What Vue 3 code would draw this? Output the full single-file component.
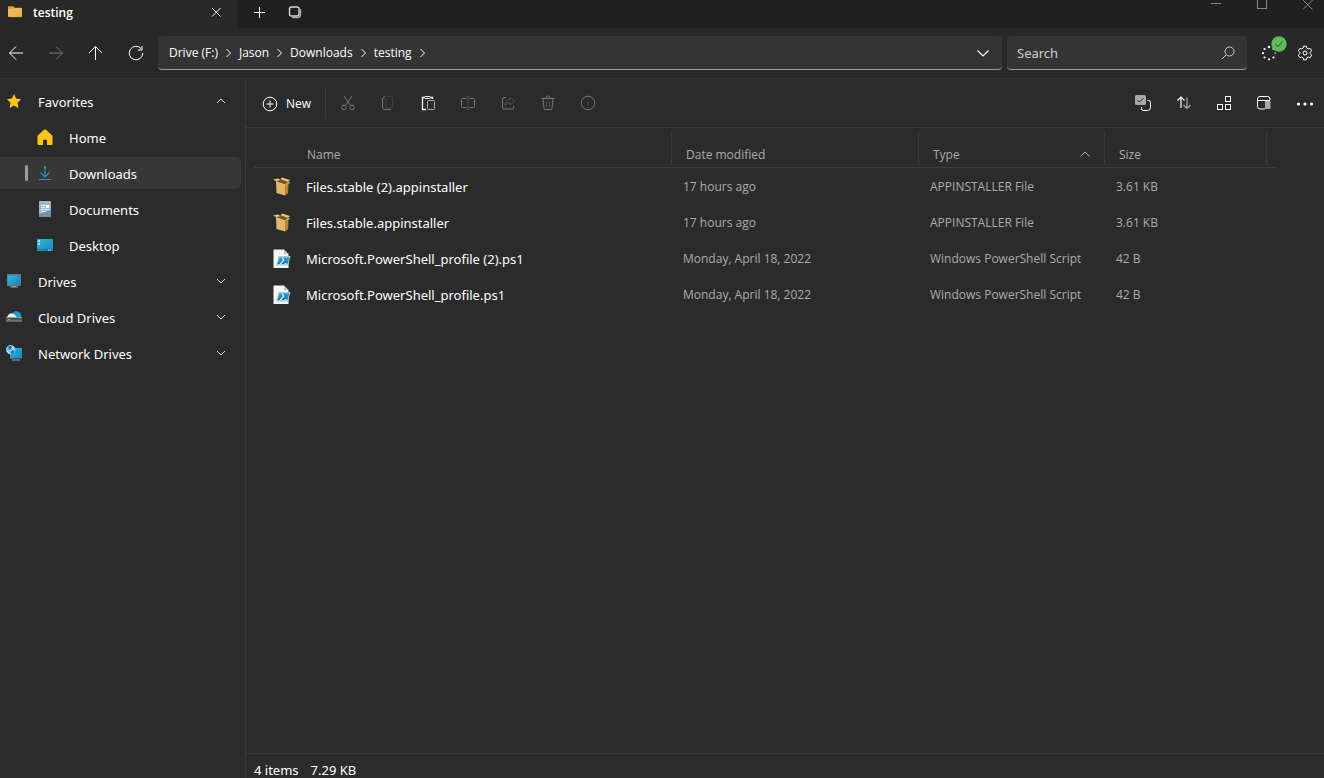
<script setup>
import { ref } from 'vue'

const search = ref('')
const crumbs = ['Drive (F:)', 'Jason', 'Downloads', 'testing']
const favorites = [
  { name: 'Home', icon: 'home' },
  { name: 'Downloads', icon: 'downloads', active: true },
  { name: 'Documents', icon: 'documents' },
  { name: 'Desktop', icon: 'desktop' },
]
const sections = [
  { name: 'Drives', icon: 'drives' },
  { name: 'Cloud Drives', icon: 'cloud' },
  { name: 'Network Drives', icon: 'network' },
]
const files = [
  { name: 'Files.stable (2).appinstaller', date: '17 hours ago', type: 'APPINSTALLER File', size: '3.61 KB', icon: 'box' },
  { name: 'Files.stable.appinstaller', date: '17 hours ago', type: 'APPINSTALLER File', size: '3.61 KB', icon: 'box' },
  { name: 'Microsoft.PowerShell_profile (2).ps1', date: 'Monday, April 18, 2022', type: 'Windows PowerShell Script', size: '42 B', icon: 'script' },
  { name: 'Microsoft.PowerShell_profile.ps1', date: 'Monday, April 18, 2022', type: 'Windows PowerShell Script', size: '42 B', icon: 'script' },
]
</script>

<template>
  <div class="window">
    <svg class="defs" width="0" height="0" aria-hidden="true">
      <defs>
        <linearGradient id="blue" x1="0" y1="0" x2="1" y2="1">
          <stop offset="0" stop-color="#35b8dc" />
          <stop offset="1" stop-color="#1683ba" />
        </linearGradient>
        <linearGradient id="folder" x1="0" y1="0" x2="1" y2="1">
          <stop offset="0" stop-color="#e5c079" />
          <stop offset="1" stop-color="#eeb03a" />
        </linearGradient>
      </defs>
    </svg>

    <header class="titlebar">
      <div class="tab">
        <svg class="folder" width="16" height="16" viewBox="0 0 16 16">
          <path d="M1 3.200a1 1 0 0 1 1-1h4.200l1.600 1.600H14a1 1 0 0 1 1 1V12H1z" fill="#e8a91c" />
          <path d="M1 5h5.400l1.300-1H14a1 1 0 0 1 1 1v7a1 1 0 0 1-1 1H2a1 1 0 0 1-1-1z" fill="url(#folder)" />
          <path d="M1.600 12.600h12.800" stroke="#f3b51c" />
        </svg>
        <span class="tab-name">testing</span>
        <button class="icon-btn tab-close" aria-label="Close tab">
          <svg width="16" height="16" viewBox="0 0 16 16"><path d="M4 4l8.500 8.500M12.500 4L4 12.500" /></svg>
        </button>
      </div>
      <button class="icon-btn new-tab" aria-label="New tab">
        <svg width="16" height="16" viewBox="0 0 16 16"><path d="M8.500 3v11M3 8.500h11" /></svg>
      </button>
      <button class="icon-btn" aria-label="Vertical tabs">
        <svg width="16" height="16" viewBox="0 0 16 16">
          <rect x="2.500" y="3" width="9.500" height="9" rx="2" stroke="#d8d8d8" stroke-width="1.400" />
          <path d="M5 13.500h5.500a3 3 0 0 0 3-3V5" stroke="#aaa" stroke-width="1.400" />
        </svg>
      </button>
      <div class="captions">
        <button class="icon-btn" aria-label="Minimize"><svg width="16" height="16" viewBox="0 0 16 16"><path d="M3 7.500h10" /></svg></button>
        <button class="icon-btn" aria-label="Maximize"><svg width="16" height="16" viewBox="0 0 16 16"><rect x="3.500" y="3.500" width="9" height="9" /></svg></button>
        <button class="icon-btn" aria-label="Close"><svg width="16" height="16" viewBox="0 0 16 16"><path d="M3 4l9.500 9.500M12.500 4L3 13.500" /></svg></button>
      </div>
    </header>

    <nav class="navbar">
      <div class="nav-buttons">
        <button class="icon-btn" aria-label="Back"><svg width="16" height="16" viewBox="0 0 16 16"><path d="M15 8H1.500M8 1.500L1.500 8 8 14.500" /></svg></button>
        <button class="icon-btn dim" aria-label="Forward"><svg width="16" height="16" viewBox="0 0 16 16"><path d="M1 8h13.500M8 1.500L14.500 8 8 14.500" /></svg></button>
        <button class="icon-btn" aria-label="Up"><svg width="16" height="16" viewBox="0 0 16 16"><path d="M7.500 15V1.500M1 8l6.500-6.500L14 8" /></svg></button>
        <button class="icon-btn" aria-label="Refresh"><svg width="16" height="16" viewBox="0 0 16 16"><path d="M13.300 3.800A6.800 6.800 0 1 0 14.800 8M14 1v4H9.800" /></svg></button>
      </div>
      <div class="address">
        <template v-for="crumb in crumbs" :key="crumb">
          <a class="crumb" href="#">{{ crumb }}</a>
          <svg class="crumb-sep" width="7" height="10" viewBox="0 0 7 10"><path d="M1.500 1L5.500 5l-4 4" /></svg>
        </template>
        <button class="icon-btn address-more" aria-label="Show history">
          <svg width="16" height="16" viewBox="0 0 16 16"><path d="M2.500 5.500L8 11l5.500-5.500" stroke-width="1.200" /></svg>
        </button>
      </div>
      <div class="search">
        <input v-model="search" type="text" placeholder="Search" aria-label="Search" />
        <button class="icon-btn" aria-label="Run search">
          <svg width="16" height="16" viewBox="0 0 16 16"><circle cx="9.500" cy="6.500" r="4.500" /><path d="M6.300 9.700L2 14" /></svg>
        </button>
      </div>
      <button class="icon-btn status-center" aria-label="Status center">
        <svg width="16" height="16" viewBox="0 0 16 16" class="dots">
          <circle cx="8" cy="2" r="1.200" /><circle cx="3.500" cy="4" r="1.100" /><circle cx="2" cy="8.200" r="1.100" />
          <circle cx="3.500" cy="12.500" r="1.100" /><circle cx="8" cy="14.300" r="1.100" /><circle cx="12.500" cy="12.500" r="1.100" />
          <circle cx="14.200" cy="8.200" r="1.100" fill="#888" /><circle cx="12.500" cy="4" r="1.100" />
        </svg>
        <svg class="badge" width="16" height="16" viewBox="0 0 16 16"><circle cx="8" cy="8" r="7.700" fill="#62bb5b" stroke="none" /><path d="M4.500 8.300l2.400 2.200 4.600-4.800" stroke="#244b22" /></svg>
      </button>
      <button class="icon-btn" aria-label="Settings">
        <svg width="16" height="16" viewBox="0 0 16 16">
          <path d="M6.600 1.200h2.800l.5 2 1.300.75 2-.6 1.500 2.500-1.500 1.400v1.500l1.500 1.400-1.500 2.500-2-.6-1.300.75-.5 2H6.600l-.5-2-1.300-.75-2 .6-1.500-2.500 1.500-1.400V7.250L1.300 5.850l1.500-2.500 2 .6 1.300-.75z" />
          <circle cx="8" cy="8" r="2" />
        </svg>
      </button>
    </nav>

    <div class="body">
      <aside class="sidebar">
        <button class="side-row section">
          <svg class="side-icon" width="16" height="16" viewBox="0 0 16 16"><path d="M8 1l2.100 4.600 5 .6-3.600 3.500.9 5.300L8 12.500 3.600 15l.9-5.300L.9 6.200l5-.6z" fill="#fac516" /></svg>
          <span>Favorites</span>
          <svg class="chev" width="12" height="12" viewBox="0 0 12 12"><path d="M2 8l4-4 4 4" /></svg>
        </button>
        <a v-for="item in favorites" :key="item.name" href="#" class="side-row child" :class="{ active: item.active }">
          <svg class="side-icon" width="16" height="16" viewBox="0 0 16 16">
            <template v-if="item.icon === 'home'">
              <path d="M.5 7.500Q.5 6.800 1 6.300L7 .8q1-.8 2 0l6 5.500q.5.500.5 1.200V15q0 1-1 1H10v-4.500q0-.8-.8-.8H6.800q-.8 0-.8.8V16H1.500q-1 0-1-1z" fill="#fac516" />
            </template>
            <template v-else-if="item.icon === 'downloads'">
              <path d="M8 1v11M3.500 7.500L8 12l4.500-4.500M2 14.500h12" fill="none" stroke="#2795c0" stroke-width="1.200" />
              <path d="M8 1v2.500" stroke="#3fae85" stroke-width="1.200" />
            </template>
            <template v-else-if="item.icon === 'documents'">
              <rect x="2" y="0" width="12" height="16" rx="1" fill="#9db8c8" />
              <path d="M2 13l12-4v6a1 1 0 0 1-1 1H3a1 1 0 0 1-1-1z" fill="#7593a8" />
              <path d="M4 4.500h5M4 6.500h4M4 8.500h8M4 10.500h5" stroke="#e4edf3" />
              <rect x="9" y="4" width="3" height="3" fill="#fff" />
            </template>
            <template v-else>
              <rect x="0" y="2" width="16" height="12" rx="1" fill="url(#blue)" />
              <path d="M1 4h2M1 7h2" stroke="#d8f4fc" stroke-width="1.500" />
              <path d="M0 12.500h16" stroke="#1878a8" /><path d="M11 13h1M13 13h1" stroke="#e4f7ff" />
            </template>
          </svg>
          <span>{{ item.name }}</span>
        </a>
        <button v-for="s in sections" :key="s.name" class="side-row section">
          <svg class="side-icon" width="16" height="16" viewBox="0 0 16 16">
            <template v-if="s.icon === 'drives'">
              <rect x="1" y="1" width="14" height="12" fill="#697378" />
              <rect x="1.500" y="2.500" width="13" height="9.500" fill="url(#blue)" />
              <path d="M6 13.500h4M4 14h8" stroke="#9ba5aa" />
            </template>
            <template v-else-if="s.icon === 'cloud'">
              <path d="M7 7a3.500 3.500 0 0 1 5-4.500Q16 4 15 8H8z" fill="#1d9bd1" />
              <path d="M1 8.500q.5-3 3-4 3-1 5 1.500L11 8.500z" fill="#e9edf0" />
              <path d="M0 8h16v4H0z" fill="#4e5356" /><path d="M0 8.500h16M0 12h16" stroke="#92979a" /><path d="M2 10.500h2" stroke="#55d267" />
            </template>
            <template v-else>
              <rect x="4" y="3" width="12" height="10.500" fill="url(#blue)" />
              <path d="M6 15h8" stroke="#9ba5aa" />
              <circle cx="4.700" cy="4.800" r="4.700" fill="#89c9e4" /><path d="M2 2q3-2 4 0L5 4 3 5zM4 7l4-2q1 3-2 4z" fill="#167aa9" /><path d="M1 6l2 2M6 2l2 2" stroke="#eef9ff" />
            </template>
          </svg>
          <span>{{ s.name }}</span>
          <svg class="chev" width="12" height="12" viewBox="0 0 12 12"><path d="M2 4l4 4 4-4" /></svg>
        </button>
      </aside>

      <main class="content">
        <div class="toolbar">
          <button class="icon-btn new-btn">
            <svg width="16" height="16" viewBox="0 0 16 16"><circle cx="8" cy="8" r="6.800" /><path d="M8 4.500v7M4.500 8h7" /></svg>
            <span>New</span>
          </button>
          <span class="divider"></span>
          <div class="tools">
            <button class="icon-btn dim" aria-label="Cut" disabled><svg width="16" height="16" viewBox="0 0 16 16"><path d="M4 1l6.500 9.500M12 1L5.500 10.500" /><circle cx="4" cy="12.500" r="2.300" /><circle cx="12" cy="12.500" r="2.300" /></svg></button>
            <button class="icon-btn dim" aria-label="Copy" disabled><svg width="16" height="16" viewBox="0 0 16 16"><rect x="5.500" y="1.500" width="7" height="11" rx="1.500" stroke="#404040" /><path d="M5 1.500Q2.500 2 2.500 4v8q0 2.500 2.500 2.500h6" /></svg></button>
            <button class="icon-btn" aria-label="Paste"><svg width="16" height="16" viewBox="0 0 16 16"><path d="M4.500 2.500h-2v12H6M10.500 2.500h2V4" stroke-width="1.300" /><rect x="4.500" y="1.500" width="6" height="2" rx="1" /><rect x="7.500" y="5.500" width="7" height="9" rx="1" stroke="#aaa" /></svg></button>
            <button class="icon-btn dim" aria-label="Rename" disabled><svg width="16" height="16" viewBox="0 0 16 16"><path d="M6.500 3.500h-4q-1 0-1 1v7q0 1 1 1h4M9.500 3.500h4q1 0 1 1v7q0 1-1 1h-4" /><path d="M8 2v12M6.500 1.500h3M6.500 14.500h3" stroke="#505050" /></svg></button>
            <button class="icon-btn dim" aria-label="Share" disabled><svg width="16" height="16" viewBox="0 0 16 16"><path d="M6 2.500H4Q2.500 2.500 2.500 4v8.500q0 1.500 1.500 1.500h8q1.500 0 1.500-1.500V11" /><path d="M10 2l4.500 4L10 10V7.800Q6.500 8 5 10.500 5.500 5 10 4.300z" stroke="#505050" /></svg></button>
            <button class="icon-btn dim" aria-label="Delete" disabled><svg width="16" height="16" viewBox="0 0 16 16"><path d="M1.500 3.500h13M6 3q0-2 2-2t2 2M3 3.500l1 10q.1 1 1 1h6q.9 0 1-1l1-10" /><path d="M6.500 6v6M9.500 6v6" stroke="#505050" /></svg></button>
            <button class="icon-btn dim" aria-label="Properties" disabled><svg width="16" height="16" viewBox="0 0 16 16"><circle cx="8" cy="8" r="6.800" /><path d="M8 7v4.500M8 4.500v1" stroke="#484848" /></svg></button>
          </div>
          <div class="tools right">
            <button class="icon-btn" aria-label="Selection options"><svg width="18" height="18" viewBox="0 0 18 18"><rect x="1" y="1" width="11" height="10" rx="1.500" fill="#a9a9a9" stroke="none" /><path d="M3.500 6l2 2 4-4" stroke="#2b2b2b" /><path d="M13.500 6.500h1q2 0 2 2v5q0 3-3 3H9q-1.500 0-1.500-2V13" /></svg></button>
            <button class="icon-btn" aria-label="Sort"><svg width="16" height="16" viewBox="0 0 16 16"><path d="M5 13V2M1.500 5.500L5 2l3.500 3.500" stroke-width="1.200" /><path d="M11 2.500v11M7.500 10l3.500 3.500 3.500-3.500" stroke="#aaa" stroke-width="1.200" /></svg></button>
            <button class="icon-btn" aria-label="Layout"><svg width="16" height="16" viewBox="0 0 16 16"><rect x="9.500" y="1.500" width="5" height="5" /><rect x="1.500" y="9.500" width="5" height="5" /><rect x="9.500" y="9.500" width="5" height="5" /></svg></button>
            <button class="icon-btn" aria-label="Preview pane"><svg width="16" height="16" viewBox="0 0 16 16"><path d="M9 6h5.500v8H9z" fill="#aaa" stroke="none" /><path d="M14 5V4q0-2.500-2.500-2.500H4Q1.500 1.500 1.500 4v7.500Q1.500 14 4 14h5M1.500 5.500H14" /></svg></button>
            <button class="icon-btn" aria-label="More"><svg width="18" height="16" viewBox="0 0 18 16" class="dots"><circle cx="2.500" cy="9" r="1.600" /><circle cx="9" cy="9" r="1.600" /><circle cx="15.500" cy="9" r="1.600" /></svg></button>
          </div>
        </div>

        <div class="files">
          <table>
            <colgroup><col /><col class="c-date" /><col class="c-type" /><col class="c-size" /><col class="c-end" /></colgroup>
            <thead>
              <tr>
                <th class="name" scope="col"><div>Name</div></th>
                <th scope="col"><div>Date modified</div></th>
                <th scope="col"><div>Type<svg width="12" height="12" viewBox="0 0 12 12"><path d="M1.500 7.500L6 3l4.500 4.500" /></svg></div></th>
                <th scope="col"><div>Size</div></th>
                <td></td>
              </tr>
            </thead>
            <tbody>
              <tr v-for="f in files" :key="f.name">
                <td class="file-name">
                  <div>
                    <svg v-if="f.icon === 'box'" width="20" height="20" viewBox="0 0 20 20">
                      <path d="M4 4l9 3v11.500L4.500 16z" fill="#e2b76c" />
                      <path d="M13 7l3.500-2-.3 11-3.200 2.500z" fill="#b98431" />
                      <path d="M4.500 3.800L9 2.500 16 5l-3 1.800z" fill="#7d541c" />
                      <path d="M1 2.500l5-1L8.500 3 4.500 4.200zM8.500 2.200l1.500-1.700L18 3l-2 2z" fill="#e9c581" />
                      <path d="M12.500 7L17 4.500l1 1.500-4 2z" fill="#d09b47" />
                    </svg>
                    <svg v-else width="20" height="20" viewBox="0 0 20 20">
                      <path d="M1.500.5H12L16.500 5v14h-15z" fill="#f5f6f7" /><path d="M12 .5V5h4.500z" fill="#b8c0c5" />
                      <path d="M6.500 7h12L16 16.500H4z" fill="#a9cbdc" /><path d="M7.500 8.500h9.800L15.500 15H5.700z" fill="#2596cb" />
                      <path d="M5.500 15l2.500-3 2.500 1.500L13 10l2.500 5z" fill="#176fa3" />
                      <path d="M10 8.500l2 3-4 3.500M12.500 14.500h2" fill="none" stroke="#e9f5fb" stroke-width="1.200" />
                    </svg>
                    <span>{{ f.name }}</span>
                  </div>
                </td>
                <td>{{ f.date }}</td>
                <td>{{ f.type }}</td>
                <td>{{ f.size }}</td>
                <td></td>
              </tr>
            </tbody>
          </table>
        </div>

        <footer class="statusbar"><span>4 items</span><span>7.29 KB</span></footer>
      </main>
    </div>
  </div>
</template>

<style>
body {
  background: #2b2b2b;
}
</style>

<style scoped>
.window {
  box-sizing: border-box;
  height: 100vh;
  display: flex;
  flex-direction: column;
  overflow: hidden;
  background: #2b2b2b;
  color: #fff;
  font-family: "Segoe UI Variable", "Segoe UI", "Noto Sans", sans-serif;
  font-size: 13px;
  line-height: 20px;
}
.defs { position: absolute; }
button, input { font: inherit; color: inherit; background: none; border: 0; padding: 0; margin: 0; }
a { color: inherit; text-decoration: none; }
svg { display: block; flex: none; }
.icon-btn {
  display: flex;
  align-items: center;
  justify-content: center;
  min-width: 16px;
  color: #fff;
}
.icon-btn svg, .crumb-sep, .chev, th svg {
  fill: none;
  stroke: currentColor;
}
.icon-btn .dots { fill: currentColor; stroke: none; }
.icon-btn.dim { color: #777; }

.titlebar {
  display: flex;
  flex: none;
  height: 28px;
  background: #202020;
}
.titlebar > .icon-btn { height: 24px; }
.tab {
  display: flex;
  align-items: center;
  box-sizing: border-box;
  width: 237px;
  padding: 0 13px 4px 7px;
  background: #282828;
  border-top-right-radius: 4px;
}
.tab-name {
  flex: 1;
  margin-left: 10px;
  padding-top: 2px;
  font-family: "Segoe UI Variable", "Segoe UI", "Open Sans", sans-serif;
  font-size: 12px;
  font-weight: 600;
}
.new-tab { margin: 0 20px 0 14px; }
.captions { display: flex; gap: 30px; margin: 0 8px 0 auto; align-items: flex-start; }
.captions .icon-btn { color: #888; height: 16px; margin-top: -4px; }

.navbar {
  display: flex;
  align-items: center;
  flex: none;
  height: 50px;
  padding-right: 11px;
  background: #282828;
  border-bottom: 1px solid #323232;
}
.nav-buttons { display: flex; gap: 24px; margin: 0 14px 0 8px; }
.address, .search {
  display: flex;
  align-items: center;
  box-sizing: border-box;
  height: 34px;
  background: #343434;
  border-bottom: 1px solid #9a9a9a;
  border-radius: 4px;
}
.address {
  flex: 1;
  gap: 7px;
  padding: 1px 11px 0 11px;
  font-family: "Segoe UI Variable", "Segoe UI", "Open Sans", sans-serif;
  font-size: 12px;
  font-weight: 500;
}
.address-more { margin-left: auto; }
.search { width: 240px; margin: 0 14px 0 5px; padding: 0 11px 0 10px; }
.search input { flex: 1; min-width: 0; outline: none; }
.search input::placeholder { color: #cfcfcf; opacity: 1; }
.search .icon-btn { color: #ccc; }
.status-center { position: relative; margin-right: 20px; }
.badge { position: absolute; left: 10px; top: -9px; }

.body { display: flex; flex: 1; min-height: 0; }
.sidebar {
  display: flex;
  flex-direction: column;
  flex: none;
  gap: 4px;
  box-sizing: border-box;
  width: 246px;
  padding: 6px 4px 0 0;
  border-right: 1px solid #3a3a3a;
}
.side-row {
  display: flex;
  align-items: center;
  box-sizing: border-box;
  height: 32px;
  padding: 2px 14px 0 6px;
  text-align: left;
  border-radius: 0 5px 5px 0;
}
.side-row span { margin-left: 16px; }
.side-icon { margin-bottom: 2px; }
.side-row .chev { margin-left: auto; color: #ddd; margin-bottom: 2px; }
.child { padding-left: 37px; position: relative; }
.active { background: #373737; }
.active::before {
  content: "";
  position: absolute;
  left: 25px;
  top: 8px;
  width: 3px;
  height: 16px;
  border-radius: 2px;
  background: #9d9d9d;
}

.content { display: flex; flex-direction: column; flex: 1; min-width: 0; }
.toolbar {
  display: flex;
  align-items: center;
  flex: none;
  height: 48px;
  padding: 0 10px 0 16px;
  border-bottom: 1px solid #3a3a3a;
}
.new-btn {
  gap: 8px;
  padding-top: 1px;
  font-family: "Segoe UI Variable", "Segoe UI", "Open Sans", sans-serif;
  font-size: 12px;
  font-weight: 500;
}
.divider { width: 1px; height: 32px; margin: 0 14px; background: #3d3d3d; }
.tools { display: flex; gap: 24px; }
.right { margin-left: auto; }

.files { flex: 1; padding: 0 48px 0 8px; }
table {
  width: 100%;
  table-layout: fixed;
  border-collapse: separate;
  border-spacing: 0;
  font-family: "Segoe UI Variable", "Segoe UI", "Open Sans", sans-serif;
  font-size: 12px;
  line-height: 16px;
  color: #ababab;
}
.c-date { width: 247px; }
.c-type { width: 186px; }
.c-size { width: 162px; }
.c-end { width: 9px; }
th, td { padding: 0; text-align: left; }
thead th, thead td { height: 39px; border-bottom: 1px solid #3d3d3d; font-weight: 400; }
th div {
  display: flex;
  align-items: center;
  justify-content: space-between;
  box-sizing: border-box;
  height: 33px;
  padding: 15px 13px 0 14px;
  border-right: 1px solid #3a3a3a;
}
th.name div { padding-left: 53px; }
tbody td { height: 34px; padding: 2px 0 0 11px; }
tbody td.file-name {
  padding-left: 18px;
  color: #fff;
  font-family: "Segoe UI Variable", "Segoe UI", "Noto Sans", sans-serif;
  font-size: 13px;
  line-height: 20px;
}
.file-name div { display: flex; align-items: center; gap: 14px; }

.statusbar {
  display: flex;
  flex: none;
  gap: 12px;
  padding: 8px 8px 0;
  line-height: 16px;
  border-top: 1px solid #3a3a3a;
}
</style>
